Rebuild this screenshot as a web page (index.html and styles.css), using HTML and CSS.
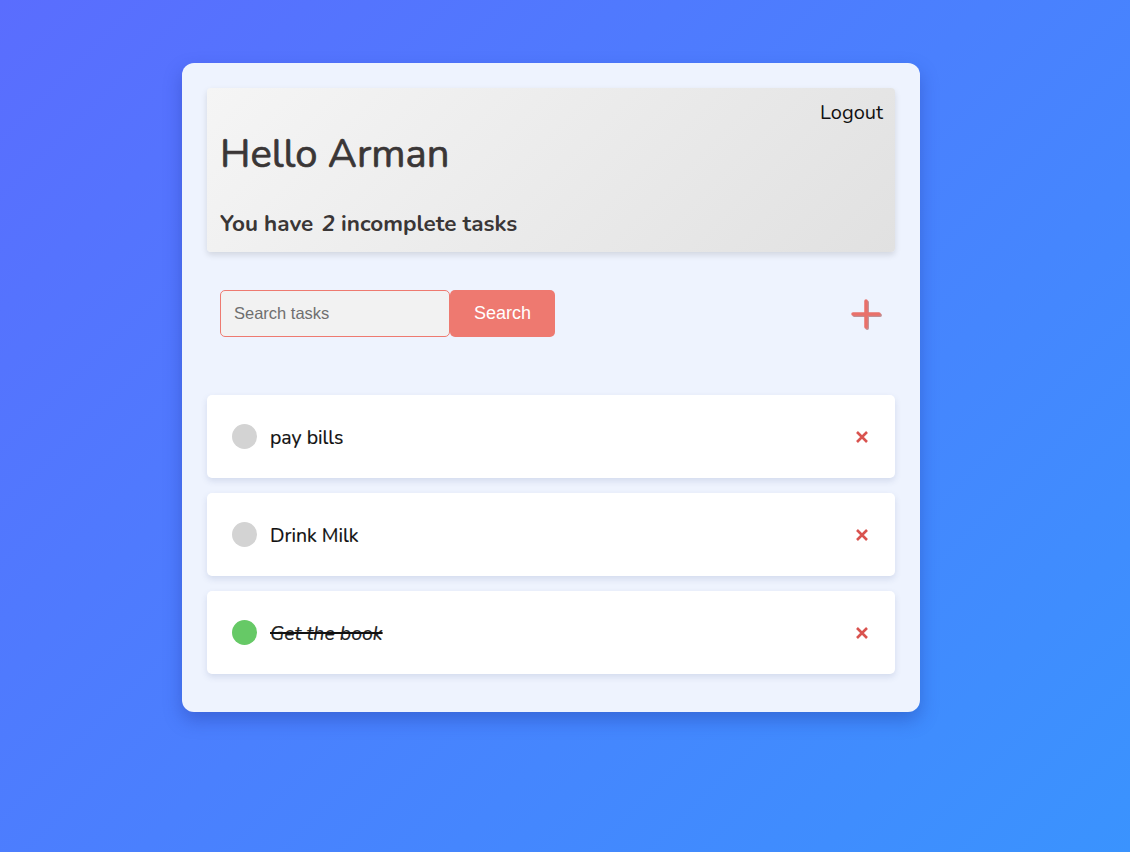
FILE: index.html
```html
<!DOCTYPE html>
<html>
<head>
<meta charset="utf-8">
<link rel="stylesheet" href="styles.css">
</head>
<body>
<main class="app">
  <header class="hero">
    <div class="hero-top"><a class="logout">Logout</a></div>
    <h1 class="hello">Hello Arman</h1>
    <p class="summary">You have <em class="count">2</em> incomplete tasks</p>
  </header>
  <section class="toolbar">
    <form class="search">
      <input class="search-input" type="text" placeholder="Search tasks">
      <button class="search-btn" type="button">Search</button>
    </form>
    <button class="add-btn" type="button" aria-label="Add task">
      <svg width="32" height="32" viewBox="0 0 32 32"><path d="M15 2v26M2 15h26" stroke="#9e3f3f" stroke-width="3.5" stroke-linecap="round" transform="translate(1.2 1.2)" opacity="0.55"/><path d="M15 2v26M2 15h26" stroke="#e9706a" stroke-width="3.5" stroke-linecap="round"/></svg>
    </button>
  </section>
  <ul class="tasks">
    <li class="task"><span class="dot"></span><span class="label">pay bills</span><svg class="del" width="14" height="14" viewBox="0 0 14 14"><path d="M2 2l10 10M12 2L2 12" stroke="#d9534f" stroke-width="2.6" stroke-linecap="butt"/></svg></li>
    <li class="task"><span class="dot"></span><span class="label">Drink Milk</span><svg class="del" width="14" height="14" viewBox="0 0 14 14"><path d="M2 2l10 10M12 2L2 12" stroke="#d9534f" stroke-width="2.6" stroke-linecap="butt"/></svg></li>
    <li class="task done"><span class="dot"></span><span class="label">Get the book</span><svg class="del" width="14" height="14" viewBox="0 0 14 14"><path d="M2 2l10 10M12 2L2 12" stroke="#d9534f" stroke-width="2.6" stroke-linecap="butt"/></svg></li>
  </ul>
</main>
</body>
</html>
```
FILE: styles.css
```css
* { box-sizing: border-box; }
html, body { height: 100%; }
body {
  margin: 0;
  background: linear-gradient(135deg, #5a6dfe 0%, #3a93fe 100%);
  font-family: "Nunito", "Lato", "Open Sans", sans-serif;
  padding-top: 63px;
}
.app {
  width: 738px;
  margin: 0 0 0 182px;
  background: #eef3fe;
  border-radius: 12px;
  padding: 25px 25px 38px;
  box-shadow: 0 8px 18px rgba(30, 50, 150, 0.35);
}
.hero {
  height: 164px;
  background: linear-gradient(135deg, #f5f5f5 0%, #e1e1e1 100%);
  border-radius: 4px;
  box-shadow: 0 3px 6px rgba(0,0,0,0.12);
  padding: 13px 12px 0 13px;
  color: #3a3636;
}
.hero-top { display: flex; justify-content: flex-end; }
.logout { font-size: 20px; color: #111; line-height: 24px; }
.hello { margin: 5px 0 0; font-size: 40px; font-weight: 400; line-height: 48px; -webkit-text-stroke: 0.7px #3a3636; }
.summary { margin: 32px 0 0; font-size: 22.5px; font-weight: 700; line-height: 28px; }
.count { font-style: italic; font-weight: 700; padding-left: 2px; }
.toolbar {
  display: flex;
  justify-content: space-between;
  padding: 38px 12px 0 13px;
  height: 143px;
  align-items: flex-start;
}
.search { display: flex; }
.search-input {
  width: 230px; height: 47px;
  border: 1px solid #ee7a70;
  border-radius: 5px;
  background: #f2f2f2;
  padding: 0 13px;
  font-family: "Liberation Sans", Arial, sans-serif;
  font-size: 16.5px;
  color: #333;
  outline: none;
}
.search-input::placeholder { color: #6f6f6f; }
.search-btn {
  width: 105px; height: 47px;
  border: none; border-radius: 5px;
  background: #ee7970;
  color: #fff;
  font-family: "Liberation Sans", Arial, sans-serif;
  font-size: 18px;
}
.add-btn { background: none; border: none; padding: 0; margin-top: 9px; width: 32px; height: 32px; }
.tasks { list-style: none; margin: 0; padding: 0; display: flex; flex-direction: column; gap: 15px; }
.task {
  height: 83px;
  background: #fff;
  border-radius: 5px;
  box-shadow: 0 3px 6px rgba(60, 80, 140, 0.15);
  display: flex; align-items: center;
  padding: 0 25px;
}
.dot { width: 25px; height: 25px; border-radius: 50%; background: #d3d3d3; flex: none; }
.done .dot { background: #66c966; }
.label { margin-left: 13px; font-size: 19.5px; color: #111; flex: 1; line-height: 24px; padding-top: 2px; -webkit-text-stroke: 0.2px #111; }
.done .label { font-style: italic; text-decoration: line-through; text-decoration-thickness: 2px; color: #222; }
.del { flex: none; margin-right: 1px; }
```
